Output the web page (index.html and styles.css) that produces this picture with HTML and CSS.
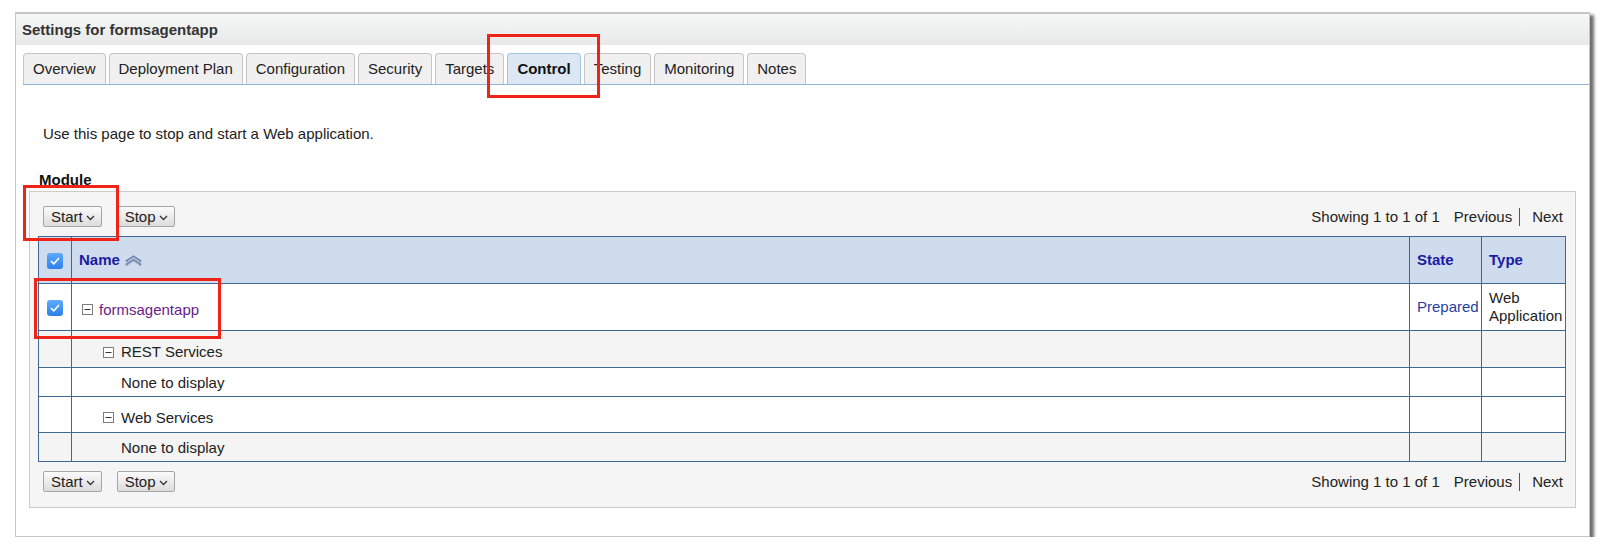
FILE: index.html
```html
<!DOCTYPE html>
<html lang="en">
<head>
  <meta charset="UTF-8">
  <title>Settings for formsagentapp</title>
  <link rel="stylesheet" href="styles.css">
</head>
<body>
  <div class="frame">
    <div class="frame-title">Settings for formsagentapp</div>
    <ul class="tabs">
      <li class="tab">Overview</li>
      <li class="tab">Deployment Plan</li>
      <li class="tab">Configuration</li>
      <li class="tab">Security</li>
      <li class="tab">Targets</li>
      <li class="tab tab-active">Control</li>
      <li class="tab">Testing</li>
      <li class="tab">Monitoring</li>
      <li class="tab">Notes</li>
    </ul>

    <p class="intro">Use this page to stop and start a Web application.</p>
    <h3 class="section-title">Module</h3>

    <div class="panel">
      <div class="toolbar">
        <div class="actions">
          <button class="btn">Start <svg class="chev" width="9" height="6" viewBox="0 0 9 6"><path d="M1 1l3.5 3.5L8 1" fill="none" stroke="#333" stroke-width="1.3"/></svg></button>
          <button class="btn">Stop <svg class="chev" width="9" height="6" viewBox="0 0 9 6"><path d="M1 1l3.5 3.5L8 1" fill="none" stroke="#333" stroke-width="1.3"/></svg></button>
        </div>
        <div class="pager">
          <span>Showing 1 to 1 of 1</span>
          <span class="pager-prev">Previous</span>
          <span class="pager-sep"></span>
          <span>Next</span>
        </div>
      </div>

      <table class="grid">
        <colgroup>
          <col class="col-check">
          <col>
          <col class="col-state">
          <col class="col-type">
        </colgroup>
        <thead>
          <tr>
            <th class="cell-check"><span class="check"><svg width="10" height="8" viewBox="0 0 10 8"><path d="M1 4.2l2.8 2.6L9 1" fill="none" stroke="#fff" stroke-width="1.6"/></svg></span></th>
            <th>Name <svg class="sort" width="19" height="11" viewBox="0 0 19 11"><path d="M2 6.5L9.5 1.5 17 6.5M2 10L9.5 5 17 10" fill="none" stroke="#6f84a6" stroke-width="2.2"/><path d="M3.5 6.4L9.5 2.4 15.5 6.4M3.5 9.9L9.5 5.9 15.5 9.9" fill="none" stroke="#c9d4e6" stroke-width="0.7"/></svg></th>
            <th>State</th>
            <th class="cell-type">Type</th>
          </tr>
        </thead>
        <tbody>
          <tr class="row-app">
            <td class="cell-check"><span class="check"><svg width="10" height="8" viewBox="0 0 10 8"><path d="M1 4.2l2.8 2.6L9 1" fill="none" stroke="#fff" stroke-width="1.6"/></svg></span></td>
            <td><span class="node node-1"><svg class="toggle" width="11" height="11" viewBox="0 0 11 11"><rect x="0.5" y="0.5" width="10" height="10" fill="#fff" stroke="#7d7d7d"/><path d="M2.5 5.5h6" stroke="#333"/></svg><span class="app-link">formsagentapp</span></span></td>
            <td class="state-link">Prepared</td>
            <td class="cell-type">Web Application</td>
          </tr>
          <tr class="row-group row-shaded">
            <td></td>
            <td><span class="node node-2"><svg class="toggle" width="11" height="11" viewBox="0 0 11 11"><rect x="0.5" y="0.5" width="10" height="10" fill="#fff" stroke="#7d7d7d"/><path d="M2.5 5.5h6" stroke="#333"/></svg>REST Services</span></td>
            <td></td>
            <td></td>
          </tr>
          <tr class="row-empty">
            <td></td>
            <td><span class="node node-leaf">None to display</span></td>
            <td></td>
            <td></td>
          </tr>
          <tr class="row-group">
            <td></td>
            <td><span class="node node-2"><svg class="toggle" width="11" height="11" viewBox="0 0 11 11"><rect x="0.5" y="0.5" width="10" height="10" fill="#fff" stroke="#7d7d7d"/><path d="M2.5 5.5h6" stroke="#333"/></svg>Web Services</span></td>
            <td></td>
            <td></td>
          </tr>
          <tr class="row-empty row-shaded">
            <td></td>
            <td><span class="node node-leaf">None to display</span></td>
            <td></td>
            <td></td>
          </tr>
        </tbody>
      </table>

      <div class="toolbar toolbar-bottom">
        <div class="actions">
          <button class="btn">Start <svg class="chev" width="9" height="6" viewBox="0 0 9 6"><path d="M1 1l3.5 3.5L8 1" fill="none" stroke="#333" stroke-width="1.3"/></svg></button>
          <button class="btn">Stop <svg class="chev" width="9" height="6" viewBox="0 0 9 6"><path d="M1 1l3.5 3.5L8 1" fill="none" stroke="#333" stroke-width="1.3"/></svg></button>
        </div>
        <div class="pager">
          <span>Showing 1 to 1 of 1</span>
          <span class="pager-prev">Previous</span>
          <span class="pager-sep"></span>
          <span>Next</span>
        </div>
      </div>
    </div>
  </div>

  <!-- red annotation boxes drawn over the screenshot -->
  <div class="callout callout-tab"></div>
  <div class="callout callout-start"></div>
  <div class="callout callout-app"></div>
</body>
</html>
```

FILE: styles.css
```css
body {
  margin: 0;
  background: #fff;
  font-family: "Liberation Sans", Arial, sans-serif;
  font-size: 15px;
  color: #222;
}
.frame {
  box-sizing: border-box;
  width: 1575px;
  height: 525px;
  margin: 12px 0 0 15px;
  border: 1px solid #c3c7cb;
  border-top-width: 2px;
  box-shadow: 4px 3px 3px #6e6e6e;
  background: #fff;
}
.frame-title {
  height: 31px;
  line-height: 31px;
  padding-left: 6px;
  font-weight: bold;
  color: #333;
  background: linear-gradient(#f7f7f7, #e7e8e8);
}
.tabs {
  list-style: none;
  display: flex;
  gap: 3px;
  height: 31px;
  margin: 8px 0 0 7px;
  padding: 0;
  border-bottom: 1px solid #93b3d6;
}
.tab {
  box-sizing: border-box;
  height: 31px;
  line-height: 30px;
  padding: 0 9px;
  border: 1px solid #c5c5c5;
  border-bottom: none;
  border-radius: 4px 4px 0 0;
  background: #f0f0f0;
  color: #222;
}
.tab-active {
  font-weight: bold;
  color: #111;
  background: #dce7f3;
  border-color: #a8c3e0;
}
.intro {
  margin: 40px 0 0 27px;
  line-height: 18px;
}
.section-title {
  margin: 28px 0 0 23px;
  font-size: 15px;
  line-height: 18px;
  color: #111;
}
.panel {
  margin: 2px 13px 0 13px;
  padding: 14px 9px 15px 8px;
  border: 1px solid #cbcbcb;
  background: #f5f5f5;
}
.toolbar {
  display: flex;
  justify-content: space-between;
  align-items: center;
  height: 21px;
  padding: 0 3px 0 5px;
}
.toolbar-bottom {
  margin-top: 9px;
}
.actions {
  display: flex;
  gap: 15px;
}
.btn {
  display: inline-flex;
  align-items: center;
  gap: 3px;
  box-sizing: border-box;
  height: 21px;
  padding: 0 6px 0 7px;
  border: 1px solid #a6a6a6;
  border-radius: 2px;
  background: linear-gradient(#fbfbfb, #dcdcdc);
  font-family: inherit;
  font-size: 15px;
  color: #222;
}
.chev {
  margin-top: 2px;
}
.pager {
  display: flex;
  align-items: center;
  color: #222;
}
.pager-prev {
  margin-left: 14px;
}
.pager-sep {
  width: 1px;
  height: 18px;
  margin: 0 12px 0 7px;
  background: #555;
}
.grid {
  width: 100%;
  margin-top: 9px;
  table-layout: fixed;
  border-collapse: collapse;
  background: #fff;
}
.col-check { width: 33px; }
.col-state { width: 72px; }
.col-type { width: 84px; }
.grid th, .grid td {
  padding: 0 7px;
  border: 1px solid #3e6796;
  line-height: 18px;
  text-align: left;
  vertical-align: middle;
}
.grid th {
  padding-top: 14px;
  padding-bottom: 14px;
  background: #cedcee;
  color: #1b1ba3;
  font-weight: bold;
}
.grid .cell-check {
  padding: 0;
  text-align: center;
}
.grid .cell-type {
  padding-right: 2px;
}
.check {
  display: inline-flex;
  align-items: center;
  justify-content: center;
  width: 16px;
  height: 16px;
  border-radius: 3px;
  background: linear-gradient(#5eaafc, #2d80ea);
  vertical-align: middle;
}
.sort {
  vertical-align: -1px;
}
.row-app td {
  padding-top: 5px;
  padding-bottom: 5px;
}
.row-group td {
  padding-top: 12px;
  padding-bottom: 5px;
}
.row-empty td {
  padding-top: 6px;
  padding-bottom: 4px;
}
.row-shaded td {
  background: #f4f4f4;
}
.node {
  display: inline-flex;
  align-items: center;
}
.node-1 {
  gap: 6px;
  margin: 6px 0 0 3px;
}
.node-2 {
  gap: 7px;
  margin-left: 24px;
}
.node-leaf {
  margin-left: 42px;
}
.app-link {
  color: #6a1b8a;
}
.state-link {
  color: #1f3f9f;
}
.callout {
  position: absolute;
  box-sizing: border-box;
  border: 3px solid #ef2316;
}
.callout-tab {
  left: 487px;
  top: 34px;
  width: 113px;
  height: 64px;
}
.callout-start {
  left: 23px;
  top: 185px;
  width: 96px;
  height: 56px;
}
.callout-app {
  left: 34px;
  top: 278px;
  width: 187px;
  height: 61px;
}
```
